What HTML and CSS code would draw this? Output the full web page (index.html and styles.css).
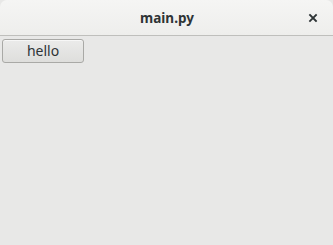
FILE: index.html
```html
<!DOCTYPE html>
<html lang="en">
	<head>
		<meta charset="UTF-8">
		<meta name="viewport" content="width=device-width, initial-scale=1.0">
		<title>main.py</title>
		<link rel="stylesheet" href="styles.css">
	</head>
	<body>
		<div class="window">
			<div class="titlebar">
				<span class="title">main.py</span>
				<span class="close">
					<svg width="10" height="10" viewBox="0 0 10 10">
						<path d="M2 2 L8 8 M8 2 L2 8" stroke="#2e3436" stroke-width="1.8" stroke-linecap="square"/>
					</svg>
				</span>
			</div>
			<div class="content">
				<button class="btn">hello</button>
			</div>
		</div>
	</body>
</html>
```

FILE: styles.css
```css
html, body {
	margin: 0;
	padding: 0;
	height: 100%;
	background: #e8e8e7;
}
body {
	font-family: "Noto Sans", "DejaVu Sans", sans-serif;
	color: #2e3436;
}
.window {
	height: 100%;
	display: flex;
	flex-direction: column;
	background: #e8e8e7;
}
.titlebar {
	height: 35px;
	flex: none;
	display: flex;
	align-items: center;
	justify-content: center;
	position: relative;
	background: linear-gradient(#f5f5f4, #eeeeec);
	border-bottom: 1px solid #bfbfbc;
	border-radius: 7px 7px 0 0;
}
.title {
	font-weight: bold;
	font-size: 13.5px;
	color: #2e3436;
	margin-left: 1px;
}
.close {
	position: absolute;
	right: 15px;
	top: 13px;
	width: 10px;
	height: 10px;
	display: flex;
}
.content {
	flex: 1;
	padding: 3px 2px;
}
.btn {
	width: 82px;
	height: 24px;
	font-family: "Noto Sans", "DejaVu Sans", sans-serif;
	font-size: 14px;
	color: #2e3436;
	background: linear-gradient(#ebebea, #dededc);
	border: 1px solid #a9a9a6;
	border-radius: 3px;
	box-shadow: inset 0 1px rgba(255, 255, 255, 0.6);
	padding: 0 0 1px;
	display: block;
}
```
